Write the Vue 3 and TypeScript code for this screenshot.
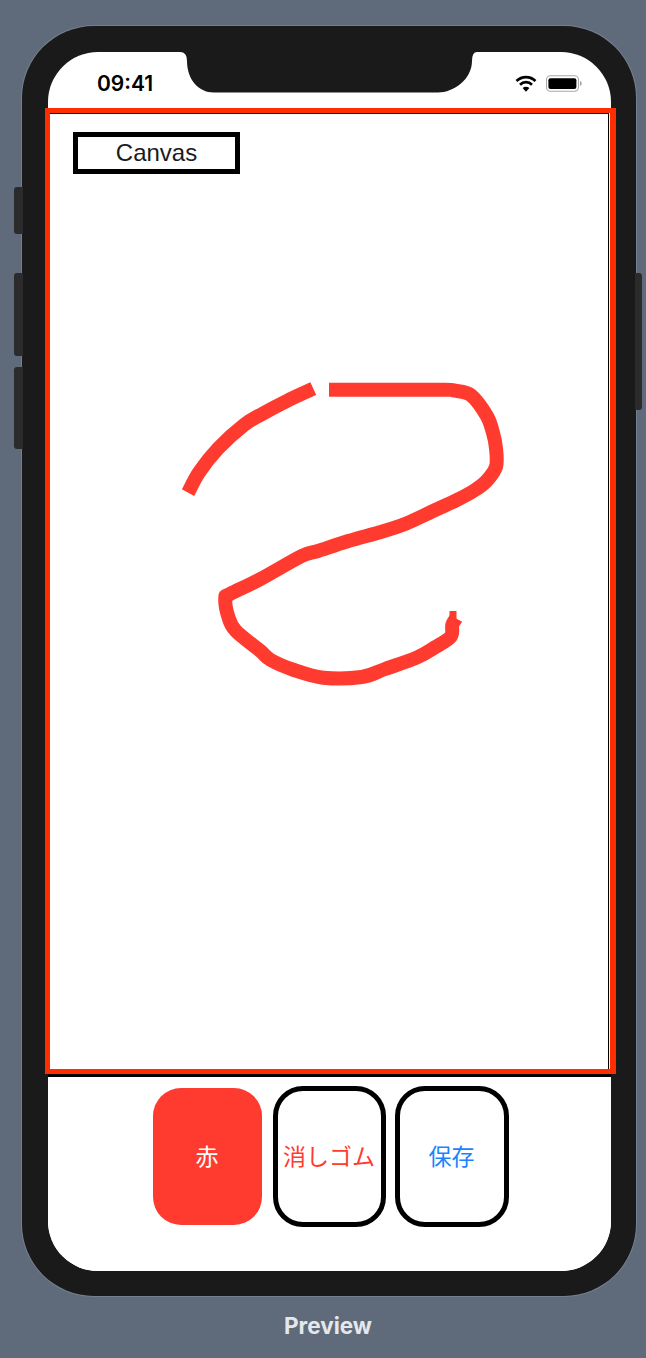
<script setup lang="ts">
type Pt = [number, number];

function smooth(points: Pt[]): string {
  let d = `M${points[0][0]} ${points[0][1]}`;
  for (let i = 0; i < points.length - 1; i++) {
    const p0 = points[Math.max(i - 1, 0)];
    const p1 = points[i];
    const p2 = points[i + 1];
    const p3 = points[Math.min(i + 2, points.length - 1)];
    const c1x = p1[0] + (p2[0] - p0[0]) / 6;
    const c1y = p1[1] + (p2[1] - p0[1]) / 6;
    const c2x = p2[0] - (p3[0] - p1[0]) / 6;
    const c2y = p2[1] - (p3[1] - p1[1]) / 6;
    d += ` C${c1x} ${c1y} ${c2x} ${c2y} ${p2[0]} ${p2[1]}`;
  }
  return d;
}

const strokeA = smooth([
  [188, 492.7], [199.3, 472], [218.3, 448.3], [244, 425], [263.3, 413.3], [287.3, 400.7], [313.3, 388.7],
]);
const strokeB = smooth([
  [329, 389.7], [380, 389.7], [443.3, 389.7], [455, 390.7], [471, 395.3], [486.7, 415.7], [492.7, 431.7], [496, 448.3], [496, 466.7],
  [486.7, 480.7], [475, 490], [458.3, 499.3], [431.7, 511.7], [405, 524], [381.7, 531.7], [348.3, 541], [318, 551], [301.7, 556],
  [260, 579.3], [230, 594], [225.3, 598.3], [228.3, 616.7], [235.7, 630.7], [260, 650.7], [270.7, 660], [294, 670], [323.3, 677.7],
  [361.7, 677], [385, 669], [416.7, 657.7], [435, 647.3], [450.7, 636.7], [452.3, 625], [456, 618.3],
]);
</script>

<template>
  <div class="page">
    <div class="device">
      <span class="key key-a"></span>
      <span class="key key-b"></span>
      <span class="key key-c"></span>
      <span class="key key-r"></span>
      <div class="screen">
        <svg class="notch" viewBox="0 0 300 41" width="300" height="41" aria-hidden="true">
          <path d="M0 0 Q7 0 7 9 C7 27 18 40.500 34 40.500 H258 C274 40.500 292 27 292 9 Q292 0 297 0 Z" fill="#1a1a1a" />
        </svg>
        <div class="status">
          <span class="time">09:41</span>
          <div class="status-icons">
            <svg width="22" height="17" viewBox="0 0 22 17" aria-hidden="true">
              <path d="M1.500 6 A13.500 13.500 0 0 1 20.500 6" fill="none" stroke="#000" stroke-width="2.700" />
              <path d="M5 9.700 A8.500 8.500 0 0 1 17 9.700" fill="none" stroke="#000" stroke-width="2.700" />
              <path d="M11 16.700 L7.600 13.100 A4.900 4.900 0 0 1 14.400 13.100 Z" fill="#000" />
            </svg>
            <svg width="36" height="17" viewBox="0 0 36 17" aria-hidden="true">
              <rect x="0.500" y="0.800" width="32" height="15.500" rx="4" fill="none" stroke="#a8a8a8" stroke-width="1.100" />
              <rect x="2.400" y="3.300" width="28" height="10.700" rx="2" fill="#000" />
              <path d="M34 6 C35.200 6.400 35.800 7.300 35.800 8.500 C35.800 9.700 35.200 10.600 34 11 Z" fill="#a8a8a8" />
            </svg>
          </div>
        </div>
        <div class="canvas">
          <svg class="ink" viewBox="49 114 559 959" aria-hidden="true">
            <g fill="none" stroke="#ff3b30" stroke-width="14" stroke-linejoin="round" stroke-linecap="butt">
              <path :d="strokeA" />
              <path :d="strokeB" />
            </g>
            <rect x="449.500" y="611" width="7" height="9" fill="#ff3b30" />
          </svg>
          <div class="title">Canvas</div>
          <div class="frame"></div>
        </div>
        <div class="tools">
          <button class="tool tool-red" type="button">赤</button>
          <button class="tool tool-erase" type="button">消しゴム</button>
          <button class="tool tool-save" type="button">保存</button>
        </div>
      </div>
    </div>
    <div class="caption">Preview</div>
  </div>
</template>

<style>
html,
body {
  margin: 0;
  background: #5f6b7a;
}
</style>

<style scoped>
.page {
  width: 646px;
  height: 1358px;
  box-sizing: border-box;
  padding: 26px 10px 0 22px;
  background: #5f6b7a;
  overflow: hidden;
}

.device {
  position: relative;
  box-sizing: border-box;
  width: 614px;
  height: 1270px;
  padding: 26px 25px 25px 26px;
  background: #1a1a1a;
  border-radius: 72px;
  box-shadow: 0 0 0 1px rgba(160, 170, 180, 0.35);
}

.key {
  position: absolute;
  width: 9px;
  background: #2b2b2b;
  border-radius: 3px 0 0 3px;
}

.key-a { left: -8px; top: 161px; height: 47px; }
.key-b { left: -8px; top: 247px; height: 83px; }
.key-c { left: -8px; top: 341px; height: 82px; }
.key-r { right: -6px; top: 247px; height: 137px; width: 7px; border-radius: 0 3px 3px 0; }

.screen {
  position: relative;
  display: flex;
  flex-direction: column;
  height: 100%;
  background: #fff;
  border-radius: 50px;
}

.notch {
  position: absolute;
  left: 132px;
  top: 0;
}

.status {
  display: flex;
  align-items: center;
  justify-content: space-between;
  box-sizing: border-box;
  height: 61px;
  flex: none;
  padding: 1px 29px 0 49px;
  color: #000;
}

.time {
  font: 600 21px/1 Inter, "Liberation Sans", sans-serif;
}

.status-icons {
  display: flex;
  align-items: center;
  gap: 9px;
}

.canvas {
  position: relative;
  box-sizing: border-box;
  width: 561px;
  height: 961px;
  flex: none;
  border: 1px solid #000;
  background: #fff;
}

.ink {
  position: absolute;
  inset: 0;
  width: 100%;
  height: 100%;
}

.title {
  position: absolute;
  left: 24px;
  top: 18px;
  box-sizing: border-box;
  width: 167px;
  height: 42px;
  border: 5px solid #000;
  background: #fff;
  color: #1c1c1c;
  font: 24px/32px "Liberation Sans", Arial, sans-serif;
  text-align: center;
}

.frame {
  position: absolute;
  left: -4px;
  right: -8px;
  top: -6px;
  bottom: -1px;
  border: 5px solid #ff2d00;
  border-right-width: 6px;
  pointer-events: none;
}

.tools {
  flex: 1;
  display: flex;
  justify-content: center;
  gap: 9px;
  padding-top: 9px;
  border-top: 3px solid #000;
  background: #fff;
  border-radius: 0 0 50px 50px;
}

.tool {
  box-sizing: border-box;
  width: 113px;
  height: 141px;
  padding: 0 0 2px;
  border: 5px solid #000;
  border-radius: 30px;
  background: #fff;
  font: 23px/1 "Noto Sans CJK JP", "Liberation Sans", sans-serif;
  white-space: nowrap;
}

.tool-red {
  border: 2px solid transparent;
  background: #ff3b30;
  background-clip: padding-box;
  color: #fff;
}

.tool-erase {
  color: #ff3b30;
}

.tool-save {
  width: 114px;
  color: #1a84ff;
}

.caption {
  width: 612px;
  margin-top: 17px;
  color: #e5e7eb;
  font: 700 22.5px/26px Inter, "Liberation Sans", sans-serif;
  text-align: center;
}
</style>
